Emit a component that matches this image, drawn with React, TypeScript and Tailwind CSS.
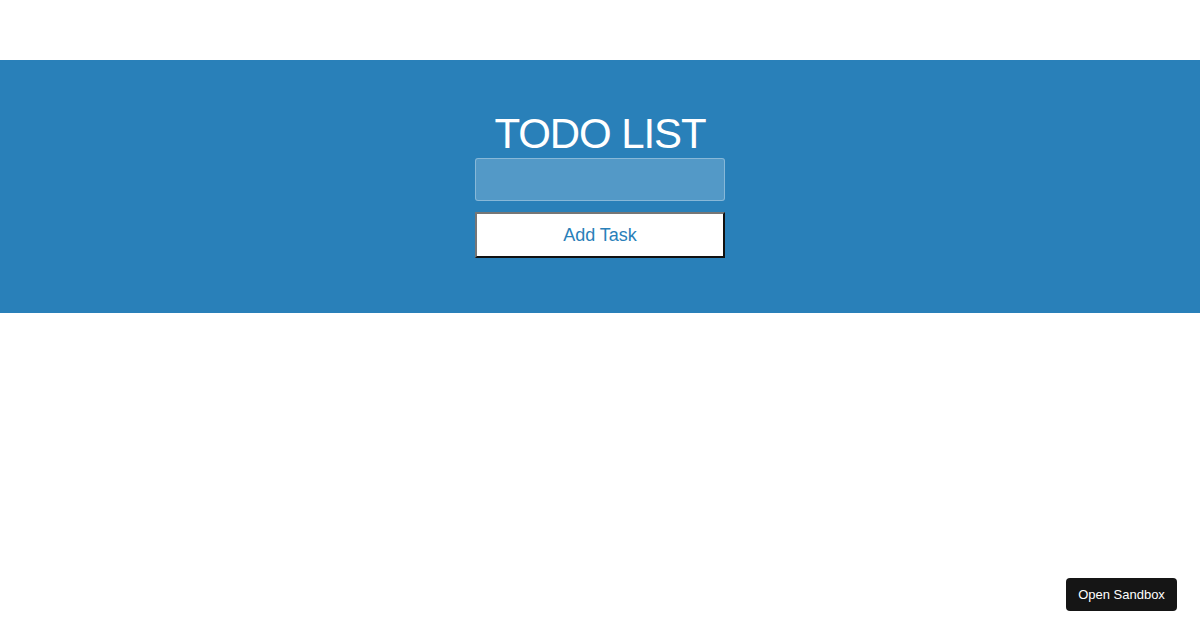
import { useState } from "react";

const App = () => {
  const [task, setTask] = useState("");

  return (
    <div className="min-h-screen bg-white font-['Liberation_Sans',Arial,sans-serif]">
      <div className="h-[60px]" />
      <header className="flex flex-col items-center bg-[#2980b9] pt-[50px] pb-[55px]">
        <h1 className="text-[42px] leading-[48px] tracking-[-1.1px] text-white">TODO LIST</h1>
        <input
          value={task}
          onChange={(e) => setTask(e.target.value)}
          className="h-[43px] w-[250px] rounded-[3px] border border-white/30 bg-white/20 px-3 text-white outline-none"
        />
        <button className="mt-[11px] h-[46px] w-[250px] border-2 border-t-[#767676] border-l-[#767676] border-r-[#111] border-b-[#111] bg-white text-[18px] text-[#2980b9]">
          Add Task
        </button>
      </header>
      <button className="fixed right-[23px] bottom-[19px] h-[33px] w-[111px] rounded-[4px] bg-[#151515] text-[13px] text-white">
        Open Sandbox
      </button>
    </div>
  );
};

export default App;
